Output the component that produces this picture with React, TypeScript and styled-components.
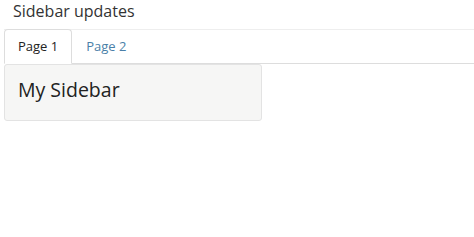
import styled, { createGlobalStyle } from 'styled-components'

const GlobalStyle = createGlobalStyle`
  html, body {
    margin: 0;
    padding: 0;
    background: #fff;
    font-family: "Open Sans", "Liberation Sans", sans-serif;
    color: #333;
  }
`

const Page = styled.div`
  padding: 0 4px;
`

const Title = styled.h2`
  margin: 0;
  padding: 0 0 0 9px;
  height: 29px;
  line-height: 23px;
  font-size: 16px;
  font-weight: 400;
  color: #333;
`

const TabList = styled.ul`
  display: flex;
  list-style: none;
  margin: 0 -4px 0 0;
  padding: 0;
  border-top: 1px solid #eee;
  border-bottom: 1px solid #ddd;
  height: 33px;
`

const Tab = styled.li<{ active?: boolean }>`
  margin-top: -1px;
  margin-bottom: -1px;
  padding: 0 13px;
  height: 33px;
  line-height: 33px;
  font-size: 13px;
  cursor: pointer;
  border: 1px solid ${props => props.active ? '#ddd' : 'transparent'};
  border-bottom-color: ${props => props.active ? '#fff' : 'transparent'};
  border-radius: 4px 4px 0 0;
  background: ${props => props.active ? '#fff' : 'transparent'};
  color: ${props => props.active ? '#222' : '#4a7fa8'};
`

const Well = styled.div`
  width: 258px;
  height: 57px;
  background: #f6f6f5;
  border: 1px solid #e3e3e3;
  border-radius: 3px;
  padding: 0 13px;
  box-sizing: border-box;
`

const WellTitle = styled.h3`
  margin: 0;
  font-size: 19.5px;
  font-weight: 400;
  line-height: 49px;
  color: #222;
`

export default function App() {
  return (
    <>
      <GlobalStyle />
      <Page>
        <Title>Sidebar updates</Title>
        <TabList>
          <Tab active>Page 1</Tab>
          <Tab>Page 2</Tab>
        </TabList>
        <Well>
          <WellTitle>My Sidebar</WellTitle>
        </Well>
      </Page>
    </>
  )
}
